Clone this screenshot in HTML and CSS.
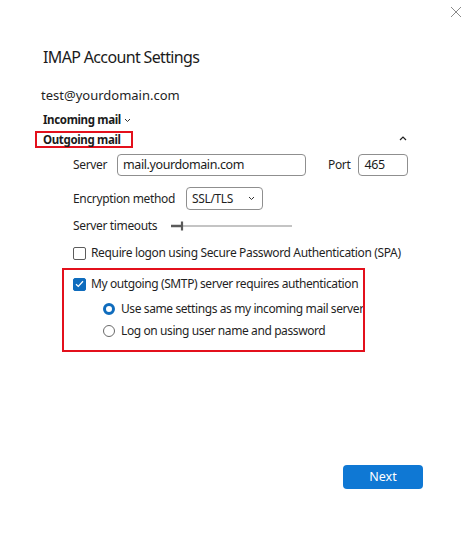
FILE: index.html
```html
<!DOCTYPE html>
<html>
<head>
<meta charset="utf-8">
<link rel="stylesheet" href="styles.css">
</head>
<body>
<div class="dialog">
  <div class="close">
    <svg width="12" height="12" viewBox="0 0 12 12"><path d="M1 1L11 11M11 1L1 11" stroke="#8a8a8a" stroke-width="1" fill="none"/></svg>
  </div>
  <div class="content">
    <h1 class="title">IMAP Account Settings</h1>
    <div class="email">test@yourdomain.com</div>
    <div class="section-head">Incoming mail<svg class="chev" width="7" height="5" viewBox="0 0 7 5"><path d="M1 1L3.5 3.5L6 1" stroke="#333" stroke-width="1" fill="none"/></svg></div>
    <div class="out-row">
      <div class="out-box"><span class="section-head">Outgoing mail</span></div>
      <svg class="caret" width="8" height="5" viewBox="0 0 8 5"><path d="M1 4L4 1L7 4" stroke="#222" stroke-width="1.2" fill="none"/></svg>
    </div>
    <div class="fields">
      <div class="row server-row">
        <span class="label">Server</span>
        <div class="input server-input">mail.yourdomain.com</div>
        <span class="label port-label">Port</span>
        <div class="input port-input">465</div>
      </div>
      <div class="row enc-row">
        <span class="label">Encryption method</span>
        <div class="select">SSL/TLS<svg class="sel-chev" width="7" height="5" viewBox="0 0 7 5"><path d="M1 1L3.5 3.5L6 1" stroke="#333" stroke-width="1" fill="none"/></svg></div>
      </div>
      <div class="row timeout-row">
        <span class="label">Server timeouts</span>
        <svg class="slider" width="122" height="12" viewBox="0 0 122 12"><path d="M0 6H11" stroke="#5a5a5a" stroke-width="2.5"/><path d="M11 6H121" stroke="#8a8a8a" stroke-width="1.2"/><path d="M11 1.5V10.5" stroke="#5a5a5a" stroke-width="2.2"/></svg>
      </div>
      <div class="row check-row spa-row">
        <span class="checkbox"></span>
        <span class="label">Require logon using Secure Password Authentication (SPA)</span>
      </div>
      <div class="auth-box">
        <div class="auth-inner">
          <div class="row check-row">
            <span class="checkbox checked"><svg width="9" height="8" viewBox="0 0 9 8"><path d="M1 4.2L3.3 6.4L8 1.3" stroke="#fff" stroke-width="1.3" fill="none"/></svg></span>
            <span class="label tight">My outgoing (SMTP) server requires authentication</span>
          </div>
          <div class="row radio-row first">
            <span class="radio selected"></span>
            <span class="label tight">Use same settings as my incoming mail server</span>
          </div>
          <div class="row radio-row">
            <span class="radio"></span>
            <span class="label tight">Log on using user name and password</span>
          </div>
        </div>
      </div>
    </div>
  </div>
  <div class="footer">
    <button class="next">Next</button>
  </div>
</div>
</body>
</html>
```
FILE: styles.css
```css
html, body {
  margin: 0;
  padding: 0;
  background: #ffffff;
}
body {
  width: 468px;
  height: 539px;
  overflow: hidden;
  font-family: "Noto Sans", "Open Sans", sans-serif;
  color: #1f1f1f;
}
.dialog {
  position: relative;
  width: 468px;
  height: 539px;
}
.close {
  position: absolute;
  left: 450px;
  top: 6px;
  width: 12px;
  height: 12px;
}
.close svg { display: block; }
.content {
  padding: 46px 0 0 43px;
}
.title {
  margin: 0;
  font-size: 16px;
  font-weight: 400;
  line-height: 22px;
  letter-spacing: -0.65px;
  color: #1b1b1b;
}
.email {
  margin-top: 18px;
  font-size: 13px;
  line-height: 18px;
  margin-left: -2px;
}
.section-head {
  font-size: 11.5px;
  font-weight: 700;
  line-height: 16px;
  letter-spacing: -0.35px;
  color: #1b1b1b;
  display: flex;
  align-items: center;
}
.content > .section-head {
  margin-top: 8px;
}
.chev { margin-left: 3px; margin-top: 1px; }
.out-row {
  display: flex;
  align-items: center;
  justify-content: space-between;
  width: 372px;
  margin-left: -8px;
  margin-top: 3px;
}
.out-box {
  border: 2px solid #e3101c;
  height: 13px;
  width: 88px;
  padding-left: 6px;
  display: flex;
  align-items: center;
}
.caret { margin-top: -2px; }
.fields {
  padding-left: 30px;
  margin-top: 6px;
}
.row {
  display: flex;
  align-items: center;
}
.label {
  font-size: 12px;
  line-height: 16px;
  letter-spacing: -0.35px;
  white-space: nowrap;
  color: #1f1f1f;
}
.label.tight { letter-spacing: -0.4px; }
.input {
  box-sizing: border-box;
  height: 22px;
  border: 1px solid #8f8f8f;
  border-radius: 4px;
  font-size: 12.5px;
  line-height: 18px;
  letter-spacing: -0.4px;
  padding: 1px 5px;
  color: #1b1b1b;
}
.server-input {
  width: 189px;
  margin-left: 10px;
}
.port-label { margin-left: 22px; }
.port-input {
  width: 50px;
  margin-left: 8px;
}
.enc-row { margin-top: 11px; }
.select {
  box-sizing: border-box;
  height: 23px;
  width: 77px;
  margin-left: 11px;
  border: 1px solid #8f8f8f;
  border-radius: 4px;
  font-size: 12px;
  letter-spacing: -0.35px;
  display: flex;
  align-items: center;
  justify-content: space-between;
  padding: 0 7px 0 5px;
}
.timeout-row { margin-top: 8px; }
.slider { margin-left: 14px; }
.spa-row { margin-top: 11px; }
.checkbox {
  box-sizing: border-box;
  width: 13px;
  height: 13px;
  border: 1px solid #5c5c5c;
  border-radius: 2px;
  margin-right: 5px;
  display: flex;
  align-items: center;
  justify-content: center;
  flex: none;
}
.checkbox.checked {
  background: #0f6cbd;
  border-color: #0f6cbd;
}
.checkbox svg { display: block; }
.auth-box {
  box-sizing: border-box;
  width: 303px;
  height: 84px;
  margin-left: -11px;
  margin-top: 7px;
  border: 2px solid #e3101c;
}
.auth-inner {
  width: 299px;
  overflow: hidden;
  padding: 6px 0 0 9px;
  box-sizing: border-box;
}
.radio-row { padding-left: 30px; margin-top: 9px; }
.radio-row.first { margin-top: 9px; }
.radio-row + .radio-row { margin-top: 6px; }
.radio {
  box-sizing: border-box;
  width: 12px;
  height: 12px;
  border-radius: 50%;
  border: 1px solid #6a6a6a;
  margin-right: 6px;
  flex: none;
}
.radio.selected {
  border: 3.5px solid #0f6cbd;
}
.footer {
  position: absolute;
  left: 343px;
  top: 464px;
}
.next {
  width: 80px;
  height: 24px;
  border: none;
  border-radius: 4px;
  background: #0f78d4;
  color: #ffffff;
  font-family: "Noto Sans", "Open Sans", sans-serif;
  font-size: 12.5px;
  padding: 0;
}
```
